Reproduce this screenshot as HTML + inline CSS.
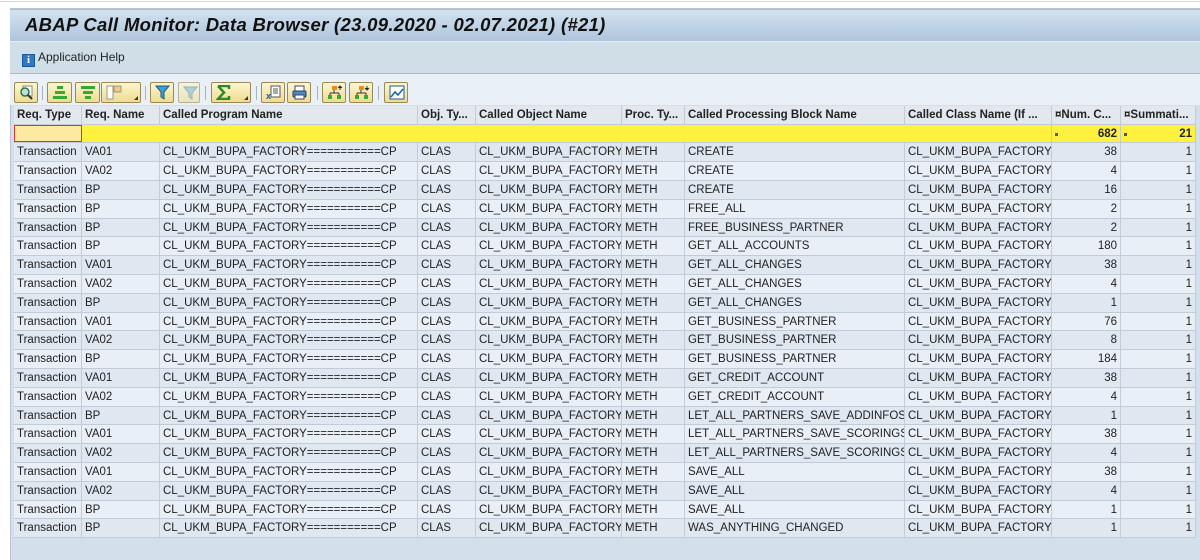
<!DOCTYPE html>
<html><head><meta charset="utf-8"><style>
*{margin:0;padding:0;box-sizing:border-box}
body{width:1200px;height:560px;overflow:hidden;background:#fff;font-family:"Liberation Sans",sans-serif;position:relative}
.frame{position:absolute;left:10px;top:8px;right:0;bottom:0;background:#d3dfea;border-left:1px solid #b8c6d2;border-top:1px solid #b8c6d2}
.topline{position:absolute;left:0;top:1px;width:1200px;height:1px;background:#d8d8d8}
.title{position:absolute;left:10px;top:9px;right:0;height:32px;background:linear-gradient(#d2e2f0,#afc5dc);border-top:1px solid #a8bcd0;font:bold italic 18.5px "Liberation Sans",sans-serif;letter-spacing:0.3px;color:#111;padding:4px 0 0 15px}
.menu{position:absolute;left:10px;top:41px;right:0;height:33px;background:#d0dee8;border-top:1px solid #e4edf4;border-bottom:1px solid #a8b8c4;font-size:12px;color:#222;padding:8px 0 0 12px}
.info{display:inline-block;width:13px;height:13px;background:#2c79c6;border:1px solid #1a5a9a;color:#fff;font:bold 11px "Liberation Serif",serif;text-align:center;line-height:11px;vertical-align:-2px;margin-right:3px}
.tb{position:absolute;left:10px;top:74px;right:0;height:31px;background:#e9f0f8}
.btn{position:absolute;top:8px;height:21px;border:1px solid #9c8a56;border-radius:2px;background:linear-gradient(#fdf6d0,#efdc8e)}
.btn svg{position:absolute;left:4px;top:2px}
.dd{position:absolute;right:2px;bottom:2px;width:0;height:0;border-left:4px solid transparent;border-bottom:4px solid #333}
.sep{position:absolute;top:12px;width:1px;height:14px;background:#a8b4c0}
.grid{position:absolute;left:14px;top:106px;width:1182px}
.r{display:flex;height:18.8px;border-bottom:1px solid #c3ccd6}
.r div{border-right:1px solid #c3ccd6;padding:0 3px;font-size:11.5px;line-height:18px;color:#222;white-space:nowrap;overflow:hidden;flex:none}
.h{background:#e3e8ee;height:19px}
.h div{font-weight:bold;color:#222;font-size:11.5px}
.t{background:#fff23f;height:18.4px}
.t div{font-weight:bold}
.a{background:#dfe7f1}.b{background:#e9eff6}
.n{text-align:right}
.c1{width:68px}.c2{width:78px}.c3{width:258px}.c4{width:58px}.c5{width:146px}.c6{width:63px}.c7{width:220px}.c8{width:147px}.c9{width:69px}.c10{width:75px}
.sq{display:inline-block;width:3px;height:3px;background:#555;float:left;margin-top:8px}
</style></head><body>
<div class="topline"></div>
<div class="frame"></div>
<div class="title">ABAP Call Monitor: Data Browser (23.09.2020 - 02.07.2021) (#21)</div>
<div class="menu"><span class="info">i</span>Application Help</div>
<div class="tb">
<div class="btn" style="left:4px;width:24px"><svg width="15" height="15"><rect x="4" y="1" width="9" height="10" fill="#fff" stroke="#888"/><circle cx="6" cy="7" r="4" fill="#bde" stroke="#2a7a2a" stroke-width="1.5"/><path d="M9 10l4 4" stroke="#333" stroke-width="2"/></svg></div>
<div class="sep" style="left:32px"></div>
<div class="btn" style="left:37px;width:25px"><svg width="16" height="15"><rect x="5" y="1" width="6" height="3" fill="#3a3"/><rect x="3" y="6" width="10" height="3" fill="#3a3"/><rect x="1" y="11" width="14" height="3" fill="#3a3"/></svg></div>
<div class="btn" style="left:65px;width:25px"><svg width="16" height="15"><rect x="1" y="1" width="14" height="3" fill="#3a3"/><rect x="3" y="6" width="10" height="3" fill="#3a3"/><rect x="5" y="11" width="6" height="3" fill="#3a3"/></svg></div>
<div class="btn" style="left:91px;width:40px"><svg width="18" height="15"><rect x="1" y="1" width="6" height="13" fill="#fff" stroke="#998"/><rect x="8" y="1" width="7" height="6" fill="#f7c97a" stroke="#998"/></svg><span class="dd"></span></div>
<div class="sep" style="left:135px"></div>
<div class="btn" style="left:140px;width:24px"><svg width="15" height="15"><path d="M1 1h13l-5 6v7l-3-2v-5z" fill="#3aa0d8" stroke="#1a5a8a"/></svg></div>
<div class="btn" style="left:168px;width:22px;opacity:.6"><svg width="15" height="15"><path d="M1 2h13l-5 6v6l-3-2v-4z" fill="#8bc" stroke="#688"/></svg></div>
<div class="sep" style="left:195px"></div>
<div class="btn" style="left:201px;width:40px"><svg width="16" height="15"><path d="M2 1h11v3M13 14H2l6-6.5L2 1M2 14h11v-3" fill="none" stroke="#2a8a2a" stroke-width="2.5"/></svg><span class="dd"></span></div>
<div class="sep" style="left:246px"></div>
<div class="btn" style="left:251px;width:24px"><svg width="15" height="15"><rect x="5" y="1" width="9" height="11" fill="#fff" stroke="#555"/><path d="M7 4h5M7 6h5M7 8h5" stroke="#555"/><text x="0" y="14" font-size="9" font-weight="bold" fill="#1a5aa0" font-family="Liberation Sans">x</text></svg></div>
<div class="btn" style="left:277px;width:24px"><svg width="15" height="15"><rect x="3" y="1" width="9" height="5" fill="#fff" stroke="#446"/><rect x="1" y="6" width="13" height="6" rx="1" fill="#4a8ac8" stroke="#246"/><rect x="3" y="10" width="9" height="4" fill="#fff" stroke="#446"/></svg></div>
<div class="sep" style="left:307px"></div>
<div class="btn" style="left:312px;width:24px"><svg width="16" height="15"><rect x="5" y="1" width="5" height="4" fill="#e88a2a"/><path d="M7 5v3M3 8h9M3 8v3M12 8v3" stroke="#333"/><rect x="1" y="10" width="4" height="4" fill="#3a3"/><rect x="10" y="10" width="4" height="4" fill="#3a3"/><path d="M13 1v4M11 3l2-2 2 2" stroke="#333"/></svg></div>
<div class="btn" style="left:339px;width:24px"><svg width="16" height="15"><rect x="5" y="1" width="5" height="4" fill="#e88a2a"/><path d="M7 5v3M3 8h9M3 8v3M12 8v3" stroke="#333"/><rect x="1" y="10" width="4" height="4" fill="#3a3"/><rect x="10" y="10" width="4" height="4" fill="#3a3"/><path d="M13 1v4M11 3l2 2 2-2" stroke="#333"/></svg></div>
<div class="sep" style="left:368px"></div>
<div class="btn" style="left:374px;width:24px"><svg width="16" height="15"><rect x="1" y="1" width="14" height="13" fill="#fff" stroke="#1a5a9a"/><path d="M2 12l4-5 3 3 5-6" fill="none" stroke="#1a6ab0" stroke-width="1.6"/></svg></div>
</div>
<div class="grid">
<div class="r h"><div class="c1">Req. Type</div><div class="c2">Req. Name</div><div class="c3">Called Program Name</div><div class="c4">Obj. Ty...</div><div class="c5">Called Object Name</div><div class="c6">Proc. Ty...</div><div class="c7">Called Processing Block Name</div><div class="c8">Called Class Name (If ...</div><div class="c9">¤Num. C...</div><div class="c10">¤Summati...</div></div>
<div class="r t"><div class="c1" style="background:#fde9a0;border:1px solid #d33"></div><div class="c2" style="border:none"></div><div class="c3" style="border:none"></div><div class="c4" style="border:none"></div><div class="c5" style="border:none"></div><div class="c6" style="border:none"></div><div class="c7" style="border:none"></div><div class="c8"></div><div class="c9 n"><span class="sq"></span>682</div><div class="c10 n"><span class="sq"></span>21</div></div>
<div class="r a"><div class="c1">Transaction</div><div class="c2">VA01</div><div class="c3">CL_UKM_BUPA_FACTORY===========CP</div><div class="c4">CLAS</div><div class="c5">CL_UKM_BUPA_FACTORY</div><div class="c6">METH</div><div class="c7">CREATE</div><div class="c8">CL_UKM_BUPA_FACTORY</div><div class="c9 n">38</div><div class="c10 n">1</div></div>
<div class="r b"><div class="c1">Transaction</div><div class="c2">VA02</div><div class="c3">CL_UKM_BUPA_FACTORY===========CP</div><div class="c4">CLAS</div><div class="c5">CL_UKM_BUPA_FACTORY</div><div class="c6">METH</div><div class="c7">CREATE</div><div class="c8">CL_UKM_BUPA_FACTORY</div><div class="c9 n">4</div><div class="c10 n">1</div></div>
<div class="r a"><div class="c1">Transaction</div><div class="c2">BP</div><div class="c3">CL_UKM_BUPA_FACTORY===========CP</div><div class="c4">CLAS</div><div class="c5">CL_UKM_BUPA_FACTORY</div><div class="c6">METH</div><div class="c7">CREATE</div><div class="c8">CL_UKM_BUPA_FACTORY</div><div class="c9 n">16</div><div class="c10 n">1</div></div>
<div class="r b"><div class="c1">Transaction</div><div class="c2">BP</div><div class="c3">CL_UKM_BUPA_FACTORY===========CP</div><div class="c4">CLAS</div><div class="c5">CL_UKM_BUPA_FACTORY</div><div class="c6">METH</div><div class="c7">FREE_ALL</div><div class="c8">CL_UKM_BUPA_FACTORY</div><div class="c9 n">2</div><div class="c10 n">1</div></div>
<div class="r a"><div class="c1">Transaction</div><div class="c2">BP</div><div class="c3">CL_UKM_BUPA_FACTORY===========CP</div><div class="c4">CLAS</div><div class="c5">CL_UKM_BUPA_FACTORY</div><div class="c6">METH</div><div class="c7">FREE_BUSINESS_PARTNER</div><div class="c8">CL_UKM_BUPA_FACTORY</div><div class="c9 n">2</div><div class="c10 n">1</div></div>
<div class="r b"><div class="c1">Transaction</div><div class="c2">BP</div><div class="c3">CL_UKM_BUPA_FACTORY===========CP</div><div class="c4">CLAS</div><div class="c5">CL_UKM_BUPA_FACTORY</div><div class="c6">METH</div><div class="c7">GET_ALL_ACCOUNTS</div><div class="c8">CL_UKM_BUPA_FACTORY</div><div class="c9 n">180</div><div class="c10 n">1</div></div>
<div class="r a"><div class="c1">Transaction</div><div class="c2">VA01</div><div class="c3">CL_UKM_BUPA_FACTORY===========CP</div><div class="c4">CLAS</div><div class="c5">CL_UKM_BUPA_FACTORY</div><div class="c6">METH</div><div class="c7">GET_ALL_CHANGES</div><div class="c8">CL_UKM_BUPA_FACTORY</div><div class="c9 n">38</div><div class="c10 n">1</div></div>
<div class="r b"><div class="c1">Transaction</div><div class="c2">VA02</div><div class="c3">CL_UKM_BUPA_FACTORY===========CP</div><div class="c4">CLAS</div><div class="c5">CL_UKM_BUPA_FACTORY</div><div class="c6">METH</div><div class="c7">GET_ALL_CHANGES</div><div class="c8">CL_UKM_BUPA_FACTORY</div><div class="c9 n">4</div><div class="c10 n">1</div></div>
<div class="r a"><div class="c1">Transaction</div><div class="c2">BP</div><div class="c3">CL_UKM_BUPA_FACTORY===========CP</div><div class="c4">CLAS</div><div class="c5">CL_UKM_BUPA_FACTORY</div><div class="c6">METH</div><div class="c7">GET_ALL_CHANGES</div><div class="c8">CL_UKM_BUPA_FACTORY</div><div class="c9 n">1</div><div class="c10 n">1</div></div>
<div class="r b"><div class="c1">Transaction</div><div class="c2">VA01</div><div class="c3">CL_UKM_BUPA_FACTORY===========CP</div><div class="c4">CLAS</div><div class="c5">CL_UKM_BUPA_FACTORY</div><div class="c6">METH</div><div class="c7">GET_BUSINESS_PARTNER</div><div class="c8">CL_UKM_BUPA_FACTORY</div><div class="c9 n">76</div><div class="c10 n">1</div></div>
<div class="r a"><div class="c1">Transaction</div><div class="c2">VA02</div><div class="c3">CL_UKM_BUPA_FACTORY===========CP</div><div class="c4">CLAS</div><div class="c5">CL_UKM_BUPA_FACTORY</div><div class="c6">METH</div><div class="c7">GET_BUSINESS_PARTNER</div><div class="c8">CL_UKM_BUPA_FACTORY</div><div class="c9 n">8</div><div class="c10 n">1</div></div>
<div class="r b"><div class="c1">Transaction</div><div class="c2">BP</div><div class="c3">CL_UKM_BUPA_FACTORY===========CP</div><div class="c4">CLAS</div><div class="c5">CL_UKM_BUPA_FACTORY</div><div class="c6">METH</div><div class="c7">GET_BUSINESS_PARTNER</div><div class="c8">CL_UKM_BUPA_FACTORY</div><div class="c9 n">184</div><div class="c10 n">1</div></div>
<div class="r a"><div class="c1">Transaction</div><div class="c2">VA01</div><div class="c3">CL_UKM_BUPA_FACTORY===========CP</div><div class="c4">CLAS</div><div class="c5">CL_UKM_BUPA_FACTORY</div><div class="c6">METH</div><div class="c7">GET_CREDIT_ACCOUNT</div><div class="c8">CL_UKM_BUPA_FACTORY</div><div class="c9 n">38</div><div class="c10 n">1</div></div>
<div class="r b"><div class="c1">Transaction</div><div class="c2">VA02</div><div class="c3">CL_UKM_BUPA_FACTORY===========CP</div><div class="c4">CLAS</div><div class="c5">CL_UKM_BUPA_FACTORY</div><div class="c6">METH</div><div class="c7">GET_CREDIT_ACCOUNT</div><div class="c8">CL_UKM_BUPA_FACTORY</div><div class="c9 n">4</div><div class="c10 n">1</div></div>
<div class="r a"><div class="c1">Transaction</div><div class="c2">BP</div><div class="c3">CL_UKM_BUPA_FACTORY===========CP</div><div class="c4">CLAS</div><div class="c5">CL_UKM_BUPA_FACTORY</div><div class="c6">METH</div><div class="c7">LET_ALL_PARTNERS_SAVE_ADDINFOS</div><div class="c8">CL_UKM_BUPA_FACTORY</div><div class="c9 n">1</div><div class="c10 n">1</div></div>
<div class="r b"><div class="c1">Transaction</div><div class="c2">VA01</div><div class="c3">CL_UKM_BUPA_FACTORY===========CP</div><div class="c4">CLAS</div><div class="c5">CL_UKM_BUPA_FACTORY</div><div class="c6">METH</div><div class="c7">LET_ALL_PARTNERS_SAVE_SCORINGS</div><div class="c8">CL_UKM_BUPA_FACTORY</div><div class="c9 n">38</div><div class="c10 n">1</div></div>
<div class="r a"><div class="c1">Transaction</div><div class="c2">VA02</div><div class="c3">CL_UKM_BUPA_FACTORY===========CP</div><div class="c4">CLAS</div><div class="c5">CL_UKM_BUPA_FACTORY</div><div class="c6">METH</div><div class="c7">LET_ALL_PARTNERS_SAVE_SCORINGS</div><div class="c8">CL_UKM_BUPA_FACTORY</div><div class="c9 n">4</div><div class="c10 n">1</div></div>
<div class="r b"><div class="c1">Transaction</div><div class="c2">VA01</div><div class="c3">CL_UKM_BUPA_FACTORY===========CP</div><div class="c4">CLAS</div><div class="c5">CL_UKM_BUPA_FACTORY</div><div class="c6">METH</div><div class="c7">SAVE_ALL</div><div class="c8">CL_UKM_BUPA_FACTORY</div><div class="c9 n">38</div><div class="c10 n">1</div></div>
<div class="r a"><div class="c1">Transaction</div><div class="c2">VA02</div><div class="c3">CL_UKM_BUPA_FACTORY===========CP</div><div class="c4">CLAS</div><div class="c5">CL_UKM_BUPA_FACTORY</div><div class="c6">METH</div><div class="c7">SAVE_ALL</div><div class="c8">CL_UKM_BUPA_FACTORY</div><div class="c9 n">4</div><div class="c10 n">1</div></div>
<div class="r b"><div class="c1">Transaction</div><div class="c2">BP</div><div class="c3">CL_UKM_BUPA_FACTORY===========CP</div><div class="c4">CLAS</div><div class="c5">CL_UKM_BUPA_FACTORY</div><div class="c6">METH</div><div class="c7">SAVE_ALL</div><div class="c8">CL_UKM_BUPA_FACTORY</div><div class="c9 n">1</div><div class="c10 n">1</div></div>
<div class="r a"><div class="c1">Transaction</div><div class="c2">BP</div><div class="c3">CL_UKM_BUPA_FACTORY===========CP</div><div class="c4">CLAS</div><div class="c5">CL_UKM_BUPA_FACTORY</div><div class="c6">METH</div><div class="c7">WAS_ANYTHING_CHANGED</div><div class="c8">CL_UKM_BUPA_FACTORY</div><div class="c9 n">1</div><div class="c10 n">1</div></div>
</div>
</body></html>
